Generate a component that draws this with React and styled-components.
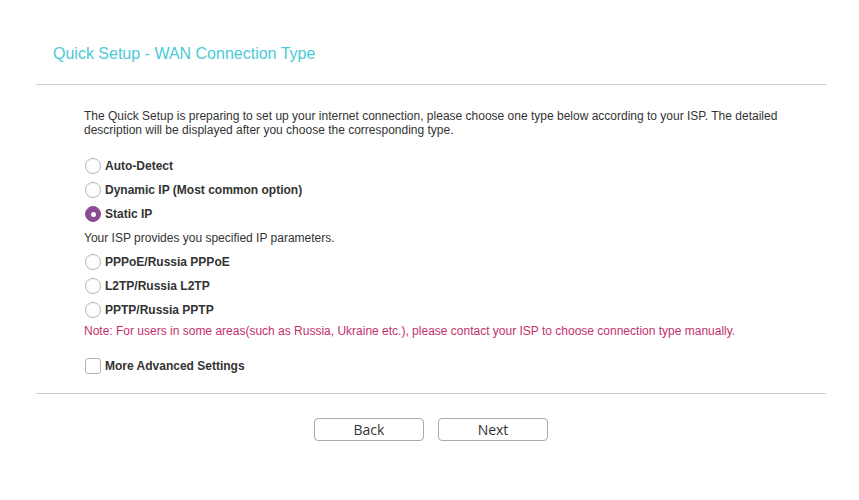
import { useState } from "react";
import styled, { createGlobalStyle } from "styled-components";

const GlobalStyle = createGlobalStyle`
  body {
    margin: 0;
    background: #fff;
    font-family: "Liberation Sans", Arial, sans-serif;
    color: #333;
  }
`;

const Page = styled.div`
  width: 790px;
  margin-left: 36px;
`;

const Header = styled.div`
  padding: 44px 17px 20px;
`;

const Title = styled.h2`
  margin: 0;
  font-size: 16px;
  line-height: 20px;
  font-weight: normal;
  color: #4acbd6;
`;

const Rule = styled.div`
  height: 1px;
  background: #cccccc;
`;

const Body = styled.div`
  padding: 24px 48px 15px;
  font-size: 12px;
`;

const Intro = styled.p`
  margin: 0 0 17px;
  line-height: 14px;
`;

const OptionRow = styled.label`
  display: flex;
  align-items: center;
  height: 24px;
  gap: 4px;
  font-weight: bold;
  cursor: pointer;
`;

const Radio = styled.span`
  box-sizing: border-box;
  width: 16px;
  height: 16px;
  margin-left: 1px;
  border-radius: 50%;
  border: 1px solid ${(p) => (p.$on ? "#8c4b92" : "#b5b5b5")};
  background: ${(p) => (p.$on ? "#8c4b92" : "#fff")};
  display: flex;
  align-items: center;
  justify-content: center;

  &::after {
    content: "";
    width: 5px;
    height: 5px;
    border-radius: 50%;
    background: #fff;
    display: ${(p) => (p.$on ? "block" : "none")};
  }
`;

const Hint = styled.div`
  height: 24px;
  line-height: 24px;
`;

const Note = styled.div`
  height: 18px;
  line-height: 18px;
  color: #c2306e;
  margin-bottom: 14px;
`;

const Checkbox = styled.span`
  box-sizing: border-box;
  width: 16px;
  height: 16px;
  margin-left: 1px;
  border: 1px solid #b5b5b5;
  border-radius: 3px;
  background: #fff;
`;

const Actions = styled.div`
  display: flex;
  justify-content: center;
  gap: 14px;
  padding-top: 24px;
`;

const Button = styled.button`
  width: 110px;
  height: 23px;
  padding: 0;
  border: 1px solid #aaaaaa;
  border-radius: 4px;
  background: #fff;
  color: #333;
  font-family: "Open Sans", sans-serif;
  font-size: 14px;
  line-height: 21px;
  cursor: pointer;
`;

const optionsTop = [
  "Auto-Detect",
  "Dynamic IP (Most common option)",
  "Static IP",
];
const optionsBottom = [
  "PPPoE/Russia PPPoE",
  "L2TP/Russia L2TP",
  "PPTP/Russia PPTP",
];

export default function App() {
  const [type, setType] = useState("Static IP");

  const renderOption = (name) => (
    <OptionRow key={name} onClick={() => setType(name)}>
      <Radio $on={type === name} />
      {name}
    </OptionRow>
  );

  return (
    <Page>
      <GlobalStyle />
      <Header>
        <Title>Quick Setup - WAN Connection Type</Title>
      </Header>
      <Rule />
      <Body>
        <Intro>
          The Quick Setup is preparing to set up your internet connection,
          please choose one type below according to your ISP. The detailed
          description will be displayed after you choose the corresponding
          type.
        </Intro>
        {optionsTop.map(renderOption)}
        <Hint>Your ISP provides you specified IP parameters.</Hint>
        {optionsBottom.map(renderOption)}
        <Note>
          Note: For users in some areas(such as Russia, Ukraine etc.), please
          contact your ISP to choose connection type manually.
        </Note>
        <OptionRow>
          <Checkbox />
          More Advanced Settings
        </OptionRow>
      </Body>
      <Rule />
      <Actions>
        <Button>Back</Button>
        <Button>Next</Button>
      </Actions>
    </Page>
  );
}
